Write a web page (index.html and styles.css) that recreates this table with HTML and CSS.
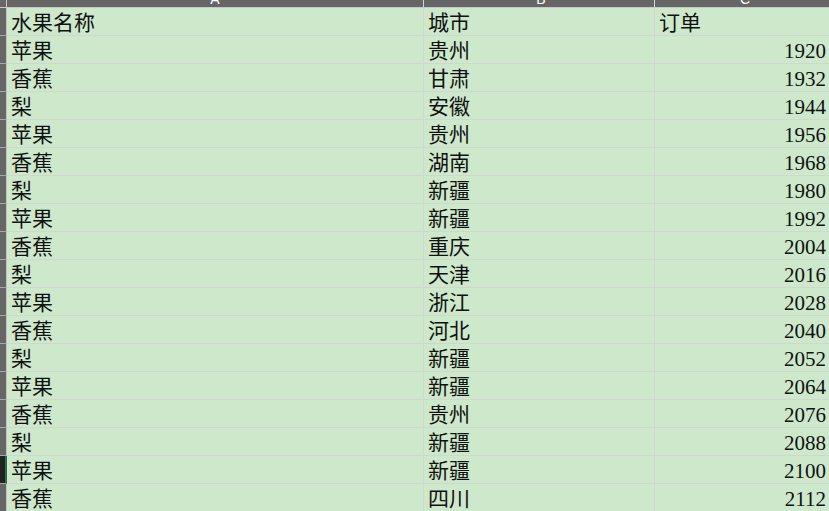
FILE: index.html
```html
<!DOCTYPE html>
<html>
<head>
<meta charset="utf-8">
<link rel="stylesheet" href="styles.css">
</head>
<body>
<div class="sheet">
  <div class="row head">
    <div class="gut corner"></div>
    <div class="cell a colhead"><span>A</span></div>
    <div class="cell b colhead"><span>B</span></div>
    <div class="cell c colhead"><span>C</span></div>
  </div>
  <div class="row"><div class="gut"></div><div class="cell a">水果名称</div><div class="cell b">城市</div><div class="cell c">订单</div></div>
  <div class="row"><div class="gut"></div><div class="cell a">苹果</div><div class="cell b">贵州</div><div class="cell c num">1920</div></div>
  <div class="row"><div class="gut"></div><div class="cell a">香蕉</div><div class="cell b">甘肃</div><div class="cell c num">1932</div></div>
  <div class="row"><div class="gut"></div><div class="cell a">梨</div><div class="cell b">安徽</div><div class="cell c num">1944</div></div>
  <div class="row"><div class="gut"></div><div class="cell a">苹果</div><div class="cell b">贵州</div><div class="cell c num">1956</div></div>
  <div class="row"><div class="gut"></div><div class="cell a">香蕉</div><div class="cell b">湖南</div><div class="cell c num">1968</div></div>
  <div class="row"><div class="gut"></div><div class="cell a">梨</div><div class="cell b">新疆</div><div class="cell c num">1980</div></div>
  <div class="row"><div class="gut"></div><div class="cell a">苹果</div><div class="cell b">新疆</div><div class="cell c num">1992</div></div>
  <div class="row"><div class="gut"></div><div class="cell a">香蕉</div><div class="cell b">重庆</div><div class="cell c num">2004</div></div>
  <div class="row"><div class="gut"></div><div class="cell a">梨</div><div class="cell b">天津</div><div class="cell c num">2016</div></div>
  <div class="row"><div class="gut"></div><div class="cell a">苹果</div><div class="cell b">浙江</div><div class="cell c num">2028</div></div>
  <div class="row"><div class="gut"></div><div class="cell a">香蕉</div><div class="cell b">河北</div><div class="cell c num">2040</div></div>
  <div class="row"><div class="gut"></div><div class="cell a">梨</div><div class="cell b">新疆</div><div class="cell c num">2052</div></div>
  <div class="row"><div class="gut"></div><div class="cell a">苹果</div><div class="cell b">新疆</div><div class="cell c num">2064</div></div>
  <div class="row"><div class="gut"></div><div class="cell a">香蕉</div><div class="cell b">贵州</div><div class="cell c num">2076</div></div>
  <div class="row"><div class="gut"></div><div class="cell a">梨</div><div class="cell b">新疆</div><div class="cell c num">2088</div></div>
  <div class="row"><div class="gut sel"></div><div class="cell a">苹果</div><div class="cell b">新疆</div><div class="cell c num">2100</div></div>
  <div class="row"><div class="gut"></div><div class="cell a">香蕉</div><div class="cell b">四川</div><div class="cell c num">2112</div></div>
</div>
</body>
</html>
```
FILE: styles.css
```css
html, body {
  margin: 0;
  padding: 0;
  overflow: hidden;
  background: #cde8cb;
}
.sheet {
  width: 829px;
  height: 511px;
  overflow: hidden;
  font-family: "Liberation Serif", "Noto Sans CJK SC", serif;
  font-size: 21px;
  color: #111;
}
.row {
  display: flex;
  height: 28px;
  box-sizing: border-box;
  border-bottom: 1px solid #d2d6d0;
}
.row.head {
  height: 8px;
  border-bottom: 1px solid #c9c9c9;
  background: #666666;
}
.gut {
  flex: 0 0 7px;
  box-sizing: border-box;
  background: #666666;
  border-right: 1px solid #c4c4c4;
  margin-bottom: -1px;
  border-bottom: 1px solid #a9a9a9;
}
.gut.corner {
  border-bottom: none;
  margin-bottom: 0;
}
.gut.sel {
  background: #222222;
  border-right: 2px solid #217346;
}
.cell {
  box-sizing: border-box;
  display: flex;
  align-items: center;
  padding-left: 4px;
  padding-top: 3px;
  line-height: 24px;
  white-space: nowrap;
  overflow: hidden;
}
.cell.a { flex: 0 0 417px; border-right: 1px solid #d2d6d0; }
.cell.b { flex: 0 0 231px; border-right: 1px solid #d2d6d0; padding-left: 4px; }
.cell.c { flex: 0 0 180px; }
.cell.num { justify-content: flex-end; padding-right: 9px; }
.colhead {
  background: #666666;
  border-right-color: #8a8a8a;
  justify-content: center;
  align-items: flex-end;
  padding-left: 0;
  padding-top: 0;
  line-height: 12px;
  font-family: "Liberation Sans", sans-serif;
  font-size: 14px;
  color: #ffffff;
}
.colhead span {
  display: block;
  margin-bottom: 2px;
}
```
